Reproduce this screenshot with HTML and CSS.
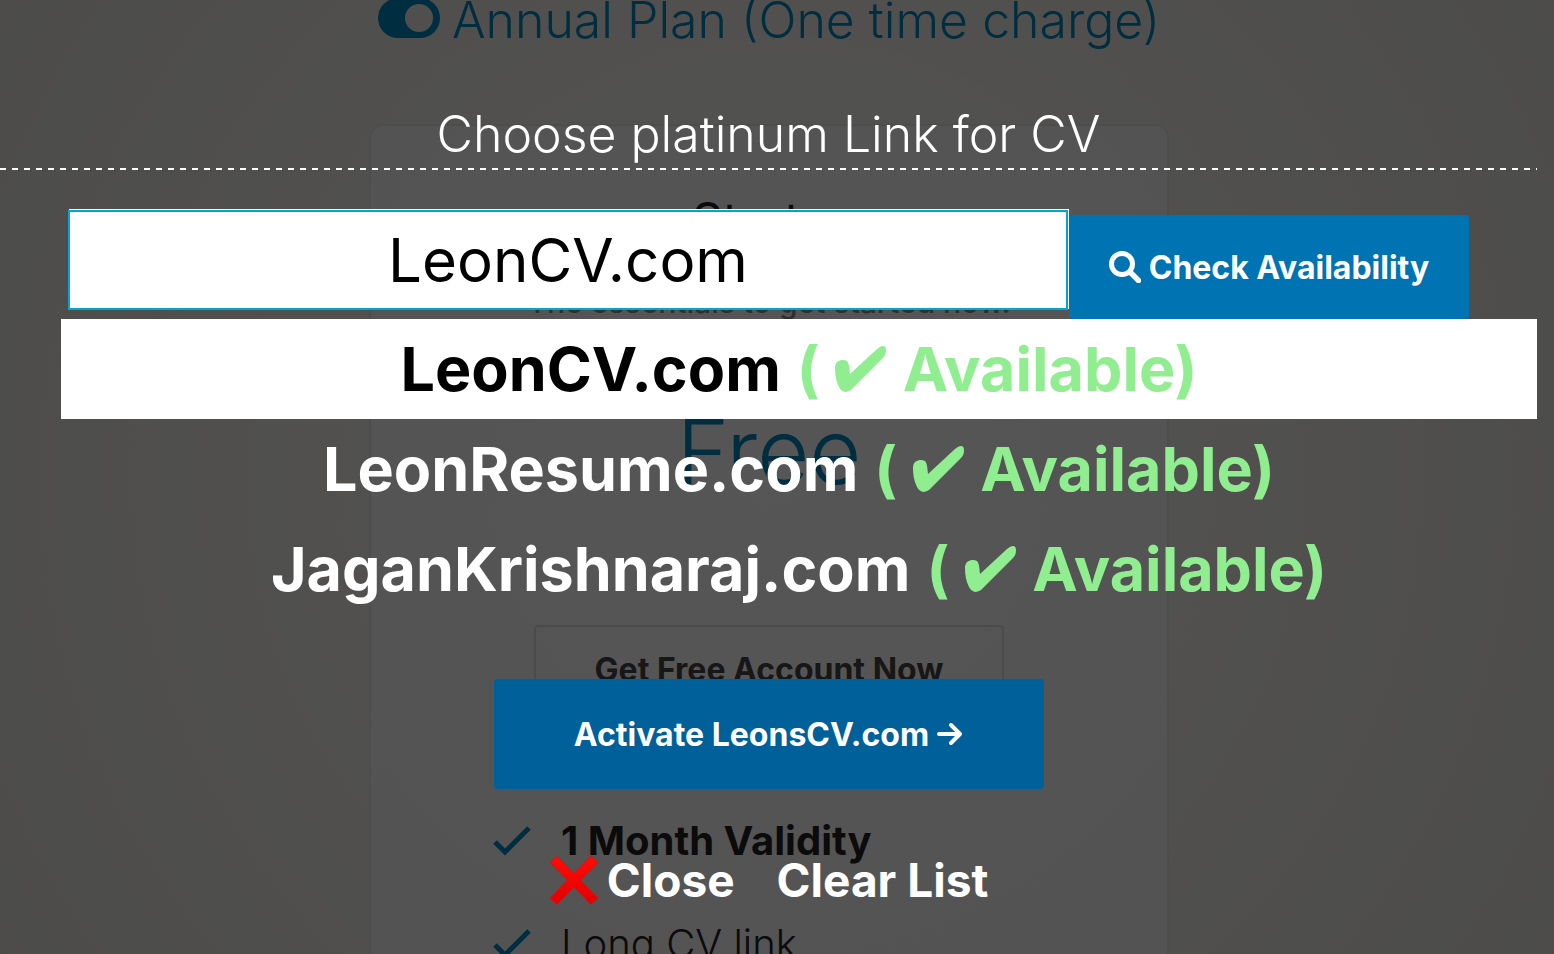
FILE: index.html
```html
<!DOCTYPE html>
<html lang="en">
<head>
<meta charset="utf-8">
<title>Choose platinum Link for CV</title>
<link rel="stylesheet" href="styles.css">
</head>
<body>
<main class="page">
  <h2 class="plan-toggle">
    <svg class="toggle-icon" viewBox="0 0 62 40" aria-hidden="true"><path fill="currentColor" fill-rule="evenodd" d="M20 -2H42A20 20 0 0 1 42 38H20A20 20 0 0 1 20 -2ZM41 4A14 14 0 1 0 41 32A14 14 0 1 0 41 4Z"/></svg>
    <span>Annual Plan (One time charge)</span>
  </h2>
  <section class="card">
    <h3 class="card-name">Starter</h3>
    <p class="card-note">The essentials to get started now.</p>
    <p class="card-price">Free</p>
    <a class="card-button" href="#">Get Free Account Now</a>
    <ul class="features">
      <li class="feature"><svg class="tick" viewBox="0 0 38 30" aria-hidden="true"><path d="M2 16L12 26L36 2" fill="none" stroke="currentColor" stroke-width="5"/></svg><strong>1 Month Validity</strong></li>
      <li class="feature"><svg class="tick" viewBox="0 0 38 30" aria-hidden="true"><path d="M2 16L12 26L36 2" fill="none" stroke="currentColor" stroke-width="5"/></svg><span>Long CV link</span></li>
    </ul>
  </section>
</main>

<div class="overlay" role="dialog" aria-labelledby="dialog-title">
  <h1 class="title" id="dialog-title">Choose platinum Link for CV</h1>
  <form class="search">
    <input class="domain" type="text" value="LeonCV.com" aria-label="Domain name">
    <button class="check" type="button">
      <svg class="search-icon" viewBox="0 0 32 32" aria-hidden="true"><circle cx="13" cy="13" r="10.5" fill="none" stroke="currentColor" stroke-width="5"/><path d="M21 21L29.500 29.500" stroke="currentColor" stroke-width="5.500" stroke-linecap="round"/></svg>
      <span>Check Availability</span>
    </button>
  </form>
  <ul class="results">
    <li class="result selected"><span>LeonCV.com</span><span class="available">( <svg class="heavy-tick" viewBox="0 0 54 48" aria-hidden="true"><path fill="currentColor" d="M1 23C1 17 5 15 9 15C15 15 15 19 16 29L43 4C48 0 52 0 52 5C52 9 51 11 48 14L20 42C14 49 8 48 5 42C2 36 1 30 1 23Z"/></svg> Available)</span></li>
    <li class="result"><span>LeonResume.com</span><span class="available">( <svg class="heavy-tick" viewBox="0 0 54 48" aria-hidden="true"><path fill="currentColor" d="M1 23C1 17 5 15 9 15C15 15 15 19 16 29L43 4C48 0 52 0 52 5C52 9 51 11 48 14L20 42C14 49 8 48 5 42C2 36 1 30 1 23Z"/></svg> Available)</span></li>
    <li class="result"><span>JaganKrishnaraj.com</span><span class="available">( <svg class="heavy-tick" viewBox="0 0 54 48" aria-hidden="true"><path fill="currentColor" d="M1 23C1 17 5 15 9 15C15 15 15 19 16 29L43 4C48 0 52 0 52 5C52 9 51 11 48 14L20 42C14 49 8 48 5 42C2 36 1 30 1 23Z"/></svg> Available)</span></li>
  </ul>
  <button class="activate" type="button">
    <span>Activate LeonsCV.com</span>
    <svg class="arrow" viewBox="0 0 26 24" aria-hidden="true"><path d="M2 12H23M14 3L23 12L14 21" fill="none" stroke="currentColor" stroke-width="4" stroke-linecap="round" stroke-linejoin="round"/></svg>
  </button>
  <div class="actions">
    <button class="action" type="button"><svg class="cross" viewBox="0 0 50 50" aria-hidden="true"><defs><linearGradient id="red" x1="0" y1="0" x2="0" y2="1"><stop offset="0" stop-color="#ff0c08"/><stop offset="1" stop-color="#e20000"/></linearGradient></defs><path fill="url(#red)" stroke="#c41a16" d="M8 1L25 18.500L42 1L49 7.500L31.500 25L49 43L42 49.500L25 32L8 49.500L1 43L18.500 25L1 7.500Z"/></svg><span>Close</span></button>
    <button class="action" type="button">Clear List</button>
  </div>
</div>
</body>
</html>
```
FILE: styles.css
```css
* { box-sizing: border-box; }

body {
  margin: 0;
  position: relative;
  height: 100vh;
  overflow: hidden;
  font-family: Inter, "Liberation Sans", sans-serif;
  background: radial-gradient(circle at 50% 50%, #f2f1ec 0, #eeece7 420px, #dddcd7 950px);
}

h1, h2, h3, p, ul { margin: 0; padding: 0; }
ul { list-style: none; }
button, input { font-family: inherit; }
svg { flex: none; }

/* Pricing page under the dialog */
.page {
  height: 100%;
  overflow: hidden;
  padding-right: 16px;
}

.plan-toggle {
  display: flex;
  justify-content: center;
  align-items: center;
  gap: 12px;
  height: 40px;
  margin-bottom: 84px;
  color: #0085ba;
  font-size: 50px;
  font-weight: 350;
  line-height: 40px;
  white-space: nowrap;
}
.toggle-icon { width: 62px; height: 40px; }

.card {
  display: flex;
  flex-direction: column;
  align-items: center;
  width: 100%;
  max-width: 800px;
  min-height: 900px;
  margin: 0 auto;
  padding-top: 62px;
  border: 2px solid #e2e2e0;
  border-radius: 14px;
  background: radial-gradient(circle at 50% 40%, #fbfbfb 0, #f2f2f2 650px);
  color: #222;
}
.card-name { font-size: 48px; font-weight: 400; line-height: 64px; }
.card-note { margin-top: 30px; color: #8a8a8a; font-size: 30px; font-weight: 500; line-height: 40px; }
.card-price { margin-top: 82px; color: #0085ba; font-size: 90px; font-weight: 350; line-height: 96px; }
.card-button {
  width: 470px;
  margin-top: 125px;
  border: 2px solid #dcdcdc;
  border-radius: 4px;
  color: #444;
  font-size: 32px;
  font-weight: 700;
  line-height: 86px;
  text-align: center;
  text-decoration: none;
}
.features { width: 552px; margin-top: 74px; }
.feature {
  display: flex;
  align-items: center;
  gap: 30px;
  font-size: 40px;
  font-weight: 300;
  line-height: 103px;
}
.feature strong { font-weight: 700; }
.tick { width: 38px; height: 30px; color: #0085ba; }

/* Dialog */
.overlay {
  position: absolute;
  inset: 0;
  display: flex;
  flex-direction: column;
  align-items: center;
  padding: 98px 17px 0 0;
  background: rgba(0, 0, 0, 0.66);
  color: #fff;
}
.title {
  width: 100%;
  background: linear-gradient(90deg, #fff 50%, transparent 50%) 0 100% / 12px 2px round no-repeat;
  font-size: 50px;
  font-weight: 350;
  line-height: 72px;
  text-align: center;
}
.search {
  display: flex;
  align-items: flex-start;
  gap: 1px;
  width: 100%;
  height: 109px;
  margin-top: 40px;
  padding: 0 68px;
}
.domain {
  flex: 1 1 0;
  min-width: 0;
  height: 100px;
  padding: 0;
  border: 2px solid #00a5d0;
  border-radius: 0;
  outline: 0;
  box-shadow: 1px -1px 0 #fff;
  background: #fff;
  color: #000;
  font-size: 60px;
  font-weight: 400;
  text-align: center;
}
.check, .activate {
  display: flex;
  justify-content: center;
  align-items: center;
  border: 0;
  border-radius: 4px;
  color: #fff;
  font-size: 32px;
  font-weight: 700;
}
.check { width: 400px; height: 104px; margin-top: 5px; gap: 8px; background: #0074b3; }
.search-icon { width: 32px; height: 32px; }

.results { align-self: stretch; padding-left: 61px; }
.result {
  display: flex;
  justify-content: center;
  gap: 16px;
  font-size: 61px;
  font-weight: 700;
  line-height: 100px;
  white-space: nowrap;
}
.selected { background: #fff; color: #000; }
.available { color: #90ee90; white-space: nowrap; }
.heavy-tick { width: 54px; height: 48px; vertical-align: -2px; }

.activate { width: 550px; height: 110px; margin-top: 60px; gap: 8px; background: #00609a; }
.arrow { width: 26px; height: 24px; }

.actions { display: flex; gap: 42px; margin-top: 59px; }
.action {
  display: flex;
  align-items: center;
  gap: 8px;
  padding: 0;
  border: 0;
  background: none;
  color: #fff;
  font-size: 46px;
  font-weight: 700;
  line-height: 64px;
}
.cross { width: 50px; height: 50px; }
```
